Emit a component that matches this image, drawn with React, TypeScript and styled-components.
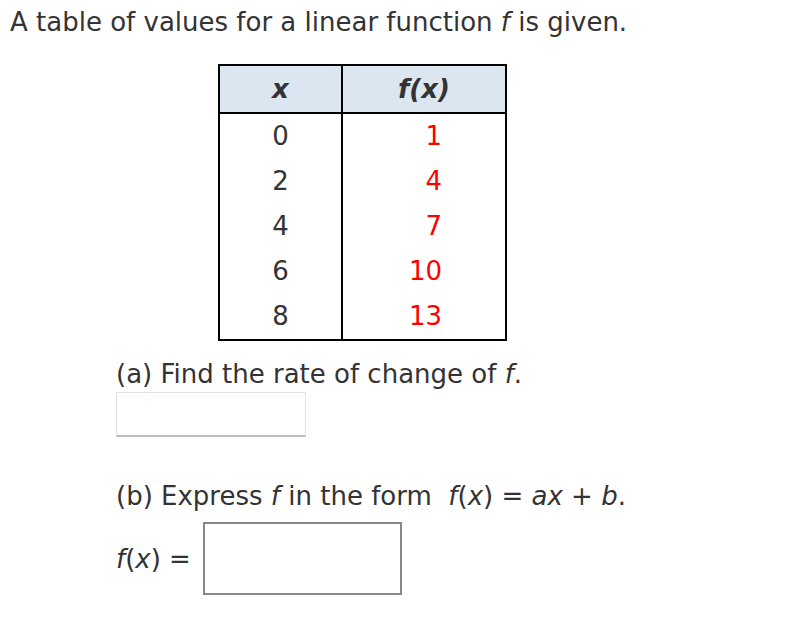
import React from "react";
import styled, { createGlobalStyle } from "styled-components";

const GlobalStyle = createGlobalStyle`
	body {
		margin: 0;
		background: #fff;
		font-family: "DejaVu Sans", Verdana, sans-serif;
		color: #333;
	}
`;

const rows = [
	{ x: 0, fx: 1 },
	{ x: 2, fx: 4 },
	{ x: 4, fx: 7 },
	{ x: 6, fx: 10 },
	{ x: 8, fx: 13 },
];

const Page = styled.div`
	padding: 4px 10px;
	font-size: 26px;
	width: 810px;
	height: 640px;
	box-sizing: border-box;
`;

const Title = styled.div`
	line-height: 36px;
`;

const Indent = styled.div`
	padding-left: 106px;
`;

const Table = styled.table`
	border-collapse: collapse;
	margin: 24px 0 0 208px;
	border: 2px solid #000;
`;

const HeadCell = styled.th<{ $w: number }>`
	background: #dce6f1;
	height: 46px;
	width: ${(p) => p.$w}px;
	font-style: italic;
	font-weight: bold;
	text-align: center;
	padding: 0;
	border-bottom: 2px solid #000;
	border-right: 2px solid #000;
	color: #333;
`;

const Cell = styled.td<{ $red?: boolean }>`
	height: 45px;
	padding: 0 ${(p) => (p.$red ? "63px" : "0")} 0 0;
	text-align: ${(p) => (p.$red ? "right" : "center")};
	color: ${(p) => (p.$red ? "#f00" : "#333")};
	border-right: 2px solid #000;
	line-height: 45px;
`;

const Question = styled.div<{ $top: number }>`
	margin-top: ${(p) => p.$top}px;
	line-height: 36px;
`;

const RateBox = styled.div`
	width: 188px;
	height: 42px;
	border: 1px solid #e2e2e2;
	border-bottom: 2px solid #bdbdbd;
`;

const AnswerRow = styled.div`
	display: flex;
	align-items: center;
	gap: 12px;
	margin-top: 8px;
`;

const Math = styled.span`
	font-style: italic;
`;

const FormBox = styled.div`
	width: 195px;
	height: 69px;
	border: 2px solid #888;
`;

export default function App() {
	return (
		<Page>
			<GlobalStyle />
			<Title>
				A table of values for a linear function <Math>f</Math> is given.
			</Title>
			<Table>
				<thead>
					<tr>
						<HeadCell $w={121}>x</HeadCell>
						<HeadCell $w={162}>f(x)</HeadCell>
					</tr>
				</thead>
				<tbody>
					{rows.map((r, i) => (
						<tr key={i}>
							<Cell>{r.x}</Cell>
							<Cell $red>{r.fx}</Cell>
						</tr>
					))}
				</tbody>
			</Table>
			<Indent>
				<Question $top={15}>
					(a) Find the rate of change of <Math>f</Math>.
				</Question>
				<RateBox />
				<Question $top={41}>
					(b) Express <Math>f</Math> in the form&nbsp; <Math>f</Math>(<Math>x</Math>) = <Math>ax</Math> + <Math>b</Math>.
				</Question>
				<AnswerRow>
					<span>
						<Math>f</Math>(<Math>x</Math>) =
					</span>
					<FormBox />
				</AnswerRow>
			</Indent>
		</Page>
	);
}
